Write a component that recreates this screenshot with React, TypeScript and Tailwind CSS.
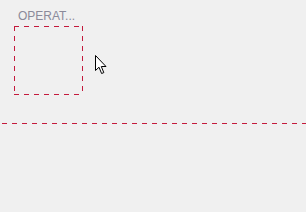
export default function App() {
  return (
    <div className="relative flex h-[212px] w-[306px] flex-col overflow-hidden bg-[#f0f0f0] font-['Liberation_Sans',sans-serif]">
      <div className="flex flex-col pl-[14px] pt-[9px]">
        <p className="pl-[4px] text-[12px] leading-[14px] text-[#8a8a9a]">OPERAT...</p>
        <div className="mt-[3px] h-[69px] w-[69px] bg-[linear-gradient(to_right,#c41a3c_0_5px,transparent_5px_10px),linear-gradient(to_right,#c41a3c_0_5px,transparent_5px_10px),linear-gradient(to_bottom,#c41a3c_0_5px,transparent_5px_10px),linear-gradient(to_bottom,#c41a3c_0_5px,transparent_5px_10px)] [background-position:left_top,left_bottom,left_top,right_top] [background-repeat:repeat-x,repeat-x,repeat-y,repeat-y] [background-size:10px_1px,10px_1px,1px_10px,1px_10px]" />
      </div>

      <div className="mt-[28px] h-px w-full bg-[linear-gradient(to_right,transparent_0_2px,#c41a3c_2px_7px,transparent_7px_10px)] [background-repeat:repeat-x] [background-size:10px_1px]" />

      <svg
        className="absolute left-[95px] top-[55px]"
        width="13"
        height="20"
        viewBox="0 0 13 20"
      >
        <path
          d="M0.5 0.5 L0.5 15.5 L4 12.2 L6.6 18.5 L8.8 17.6 L6.3 11.5 L11 11.5 Z"
          fill="#ffffff"
          stroke="#000000"
          strokeWidth="1"
          strokeLinejoin="miter"
        />
      </svg>
    </div>
  );
}
